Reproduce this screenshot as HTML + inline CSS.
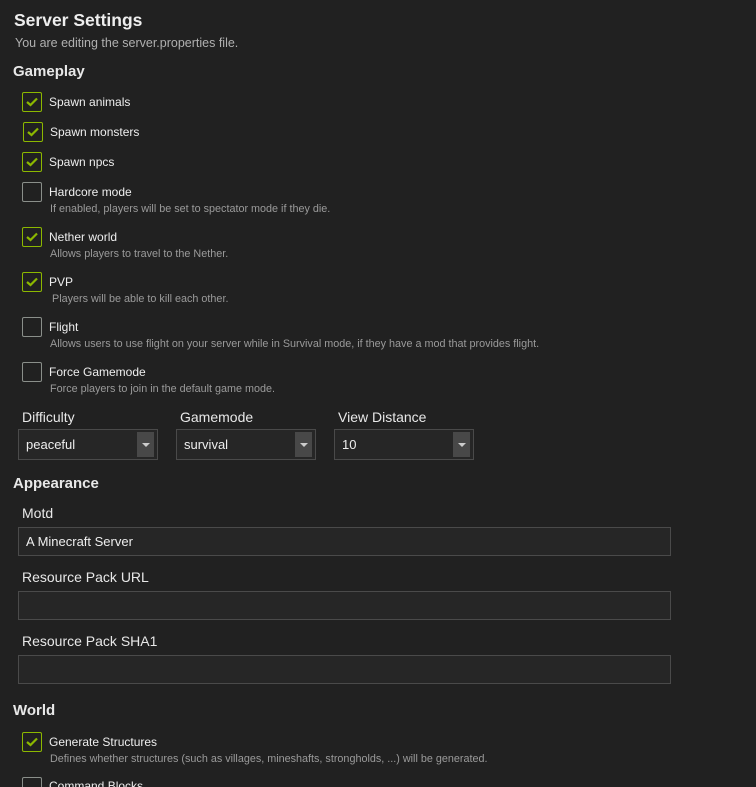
<!DOCTYPE html>
<html><head><meta charset="utf-8"><style>
*{margin:0;padding:0;box-sizing:border-box}
html,body{width:756px;height:787px;overflow:hidden}
body{background:#212121;font-family:"Liberation Sans",sans-serif;color:#e8e8e8;position:relative}
.a{position:absolute;white-space:nowrap}
h1{position:absolute;left:14px;top:10px;font-size:17.5px;font-weight:bold;color:#eee}
.sub{left:15px;top:36px;font-size:12.5px;color:#b0b0b0}
.h{font-size:15px;font-weight:bold;color:#e8e8e8;left:13px}
.cb{position:absolute;width:20px;height:20px;border:1px solid #8a8f8a;border-radius:2px}
.cb.on{border-color:#8cb800}
.cb.on svg{position:absolute;left:3px;top:4px}
.lb{font-size:12px;color:#eee;left:49px}
.ds{font-size:10.8px;color:#9a9a9a;left:50px}
.fl{font-size:14px;color:#e8e8e8}
.sel{position:absolute;top:429px;width:140px;height:31px;border:1px solid #4a4a4a;background:#262626;font-size:13px;color:#eee;padding:7px 0 0 7px}
.sel i{position:absolute;right:3px;top:2px;width:17px;height:25px;background:#484848}
.sel i:after{content:"";position:absolute;left:5px;top:11px;border-left:4px solid transparent;border-right:4px solid transparent;border-top:4px solid #ccc}
.inp{position:absolute;left:18px;width:653px;height:29px;border:1px solid #4a4a4a;background:#262626;font-size:13px;color:#eee;padding:6px 0 0 7px}
</style></head><body>
<h1>Server Settings</h1>
<div class="a sub">You are editing the server.properties file.</div>
<div class="a h" style="top:63px">Gameplay</div>

<div class="cb on" style="left:22px;top:92px"><svg width="12" height="10"><path d="M1 5 L4.5 8 L11 1.5" stroke="#8cb800" stroke-width="2.2" fill="none"/></svg></div>
<div class="a lb" style="top:95px">Spawn animals</div>
<div class="cb on" style="left:23px;top:122px"><svg width="12" height="10"><path d="M1 5 L4.5 8 L11 1.5" stroke="#8cb800" stroke-width="2.2" fill="none"/></svg></div>
<div class="a lb" style="top:125px;left:50px">Spawn monsters</div>
<div class="cb on" style="left:22px;top:152px"><svg width="12" height="10"><path d="M1 5 L4.5 8 L11 1.5" stroke="#8cb800" stroke-width="2.2" fill="none"/></svg></div>
<div class="a lb" style="top:155px">Spawn npcs</div>
<div class="cb" style="left:22px;top:182px"></div>
<div class="a lb" style="top:185px">Hardcore mode</div>
<div class="a ds" style="top:203px">If enabled, players will be set to spectator mode if they die.</div>
<div class="cb on" style="left:22px;top:227px"><svg width="12" height="10"><path d="M1 5 L4.5 8 L11 1.5" stroke="#8cb800" stroke-width="2.2" fill="none"/></svg></div>
<div class="a lb" style="top:230px">Nether world</div>
<div class="a ds" style="top:248px">Allows players to travel to the Nether.</div>
<div class="cb on" style="left:22px;top:272px"><svg width="12" height="10"><path d="M1 5 L4.5 8 L11 1.5" stroke="#8cb800" stroke-width="2.2" fill="none"/></svg></div>
<div class="a lb" style="top:275px">PVP</div>
<div class="a ds" style="top:293px;left:52px">Players will be able to kill each other.</div>
<div class="cb" style="left:22px;top:317px"></div>
<div class="a lb" style="top:320px">Flight</div>
<div class="a ds" style="top:338px">Allows users to use flight on your server while in Survival mode, if they have a mod that provides flight.</div>
<div class="cb" style="left:22px;top:362px"></div>
<div class="a lb" style="top:365px">Force Gamemode</div>
<div class="a ds" style="top:383px">Force players to join in the default game mode.</div>

<div class="a fl" style="left:22px;top:409px">Difficulty</div>
<div class="a fl" style="left:180px;top:409px">Gamemode</div>
<div class="a fl" style="left:338px;top:409px">View Distance</div>
<div class="sel" style="left:18px">peaceful<i></i></div>
<div class="sel" style="left:176px">survival<i></i></div>
<div class="sel" style="left:334px">10<i></i></div>

<div class="a h" style="top:475px">Appearance</div>
<div class="a fl" style="left:22px;top:505px">Motd</div>
<div class="inp" style="top:527px">A Minecraft Server</div>
<div class="a fl" style="left:22px;top:569px">Resource Pack URL</div>
<div class="inp" style="top:591px"></div>
<div class="a fl" style="left:22px;top:633px">Resource Pack SHA1</div>
<div class="inp" style="top:655px"></div>

<div class="a h" style="top:702px">World</div>
<div class="cb on" style="left:22px;top:732px"><svg width="12" height="10"><path d="M1 5 L4.5 8 L11 1.5" stroke="#8cb800" stroke-width="2.2" fill="none"/></svg></div>
<div class="a lb" style="top:735px">Generate Structures</div>
<div class="a ds" style="top:753px">Defines whether structures (such as villages, mineshafts, strongholds, ...) will be generated.</div>
<div class="cb" style="left:22px;top:777px"></div>
<div class="a lb" style="top:779px">Command Blocks</div>
</body></html>
